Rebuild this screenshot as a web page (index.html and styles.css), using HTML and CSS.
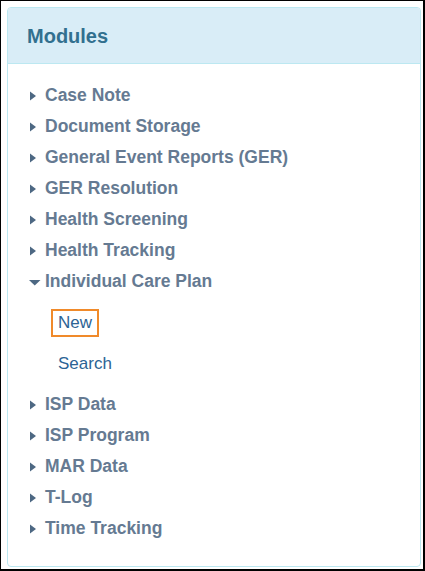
FILE: index.html
```html
<!DOCTYPE html>
<html lang="en">
<head>
<meta charset="utf-8">
<title>Modules</title>
<link rel="stylesheet" href="styles.css">
</head>
<body>
<div class="frame">
  <div class="panel">
    <div class="panel-heading">Modules</div>
    <ul class="menu">
      <li class="item"><span class="caret"><svg width="10" height="10" viewBox="0 0 10 10"><path d="M1 0.5 L7 5 L1 9.5 Z"/></svg></span>Case Note</li>
      <li class="item"><span class="caret"><svg width="10" height="10" viewBox="0 0 10 10"><path d="M1 0.5 L7 5 L1 9.5 Z"/></svg></span>Document Storage</li>
      <li class="item"><span class="caret"><svg width="10" height="10" viewBox="0 0 10 10"><path d="M1 0.5 L7 5 L1 9.5 Z"/></svg></span>General Event Reports (GER)</li>
      <li class="item"><span class="caret"><svg width="10" height="10" viewBox="0 0 10 10"><path d="M1 0.5 L7 5 L1 9.5 Z"/></svg></span>GER Resolution</li>
      <li class="item"><span class="caret"><svg width="10" height="10" viewBox="0 0 10 10"><path d="M1 0.5 L7 5 L1 9.5 Z"/></svg></span>Health Screening</li>
      <li class="item"><span class="caret"><svg width="10" height="10" viewBox="0 0 10 10"><path d="M1 0.5 L7 5 L1 9.5 Z"/></svg></span>Health Tracking</li>
      <li class="item"><span class="caret"><svg width="12" height="10" viewBox="0 0 12 10"><path d="M0 3 L11.5 3 L5.75 8.5 Z"/></svg></span>Individual Care Plan</li>
      <li class="sub">
        <a class="sublink active">New</a>
        <a class="sublink">Search</a>
      </li>
      <li class="item"><span class="caret"><svg width="10" height="10" viewBox="0 0 10 10"><path d="M1 0.5 L7 5 L1 9.5 Z"/></svg></span>ISP Data</li>
      <li class="item"><span class="caret"><svg width="10" height="10" viewBox="0 0 10 10"><path d="M1 0.5 L7 5 L1 9.5 Z"/></svg></span>ISP Program</li>
      <li class="item"><span class="caret"><svg width="10" height="10" viewBox="0 0 10 10"><path d="M1 0.5 L7 5 L1 9.5 Z"/></svg></span>MAR Data</li>
      <li class="item"><span class="caret"><svg width="10" height="10" viewBox="0 0 10 10"><path d="M1 0.5 L7 5 L1 9.5 Z"/></svg></span>T-Log</li>
      <li class="item"><span class="caret"><svg width="10" height="10" viewBox="0 0 10 10"><path d="M1 0.5 L7 5 L1 9.5 Z"/></svg></span>Time Tracking</li>
    </ul>
  </div>
</div>
</body>
</html>
```

FILE: styles.css
```css
* { box-sizing: border-box; }
html, body { margin: 0; padding: 0; background: #fff; }
body { font-family: "Liberation Sans", Arial, sans-serif; }

.frame {
  width: 425px;
  height: 571px;
  border: 1px solid #000;
  border-right-width: 2px;
  border-bottom-width: 2px;
  padding: 6px 2px 2px 6px;
  display: flex;
  flex-direction: column;
}

.panel {
  flex: 1;
  border: 1px solid #bce8f1;
  border-radius: 4px;
  background: #fff;
  overflow: hidden;
}

.panel-heading {
  background: #d9edf7;
  border-bottom: 1px solid #bce8f1;
  color: #31708f;
  font-size: 20px;
  font-weight: bold;
  line-height: 22px;
  padding: 17px 19px 16px;
}

.menu {
  list-style: none;
  margin: 0;
  padding: 16px 0 0 21px;
}

.item {
  display: flex;
  align-items: center;
  height: 31px;
  font-size: 17.5px;
  font-weight: bold;
  color: #657a92;
}

.caret {
  width: 16px;
  display: flex;
  align-items: center;
  fill: #4d6883;
}
.caret svg { display: block; }

.sub {
  display: flex;
  flex-direction: column;
  align-items: flex-start;
  gap: 13px;
  padding: 12px 0 11px 22px;
}

.sublink {
  display: block;
  height: 28px;
  line-height: 24px;
  font-size: 17px;
  color: #2c6394;
  border: 2px solid transparent;
  padding: 0 5px;
}

.sublink.active { border-color: #f08a2a; }
```
